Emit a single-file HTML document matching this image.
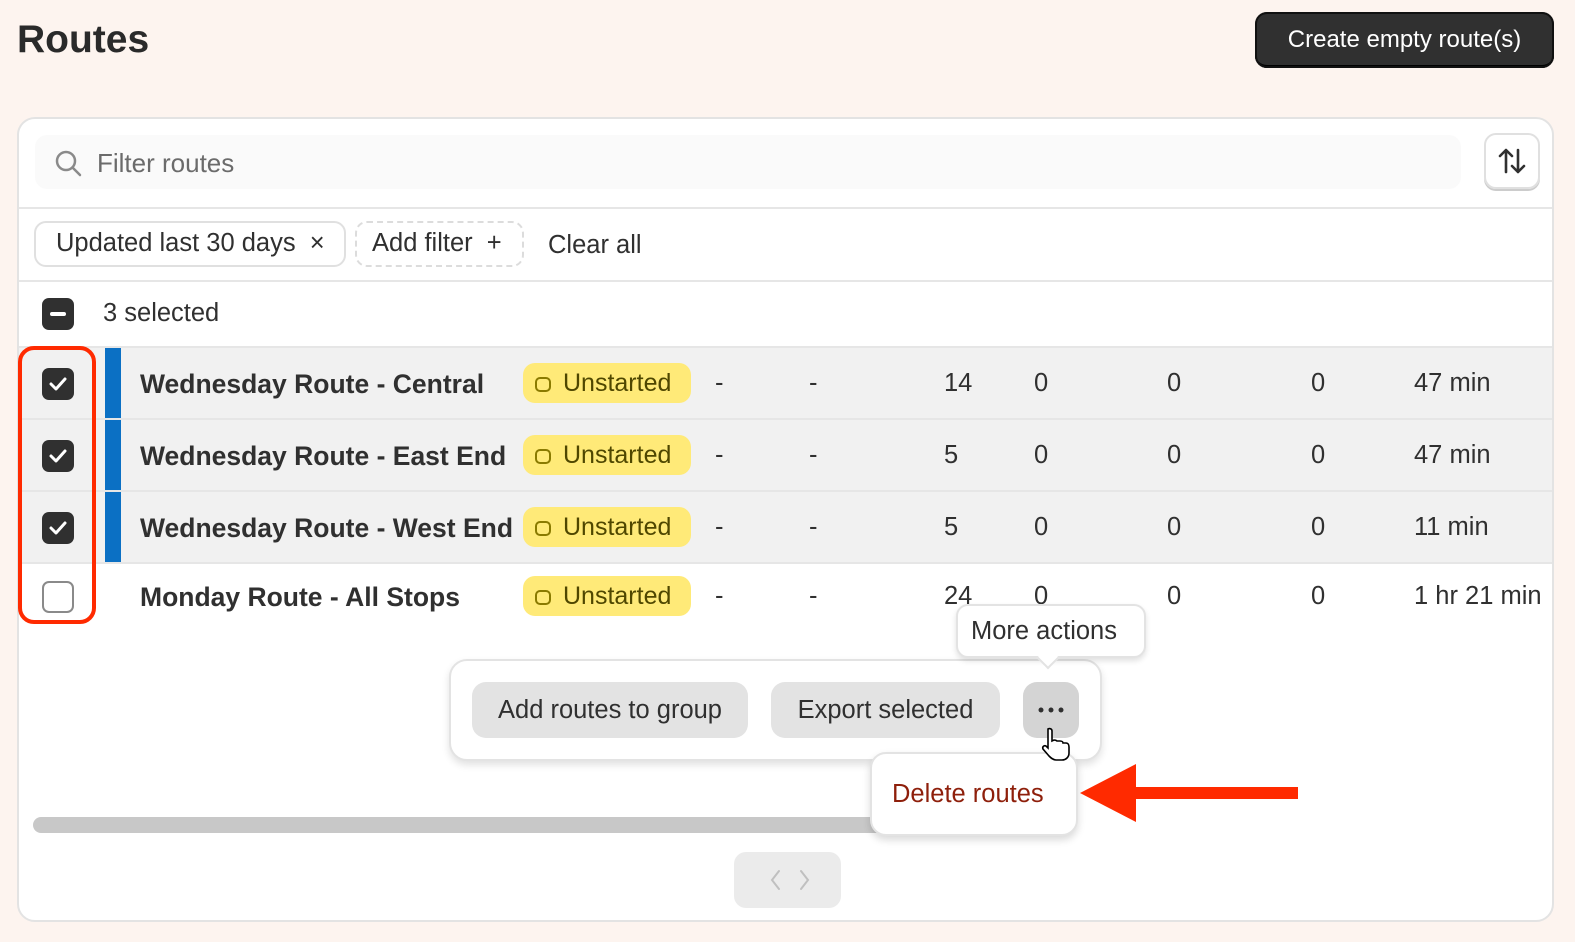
<!DOCTYPE html>
<html><head><style>
*{box-sizing:border-box;margin:0;padding:0}
body{width:1575px;height:942px;background:#fdf4ef;font-family:"Liberation Sans",sans-serif;color:#303030;position:relative;overflow:hidden}
.abs{position:absolute}
h1{position:absolute;left:17px;top:18px;font-size:39px;font-weight:bold;color:#2a2a2a}
.create{left:1255px;top:12px;width:299px;height:56px;background:#303030;border-radius:12px;color:#fff;font-size:24px;display:flex;align-items:center;justify-content:center;box-shadow:0 0 0 2px #111 inset,0 -3px 0 #000 inset}
.card{left:17px;top:117px;width:1537px;height:805px;background:#fff;border:2px solid #e3e3e3;border-radius:18px;overflow:hidden}
.search{left:16px;top:16px;width:1426px;height:54px;background:#fafafa;border-radius:12px}
.t{position:absolute;font-size:25.5px;white-space:nowrap}
.row{position:absolute;left:0;width:1537px;height:72px;border-top:2px solid #e6e6e6}
.sel{background:#f1f1f1}
.cb{position:absolute;left:23px;width:32px;height:32px;border-radius:7px;background:#303030}
.bar{position:absolute;left:86px;top:0;width:16px;height:100%;background:#0b70c4}
.badge{position:absolute;left:504px;width:168px;height:40px;border-radius:12px;background:#ffea78;color:#4f4700;font-size:25px;padding-left:40px;line-height:40px}
.badge:before{content:"";position:absolute;left:12px;top:14px;width:12px;height:11px;border:2.5px solid #8a7a00;border-radius:5px}
.name{font-weight:bold;left:121px;font-size:26.5px}
.btn{position:absolute;background:#e3e3e3;border-radius:14px;font-size:25.5px;display:flex;align-items:center;justify-content:center;color:#303030}
</style></head><body>
<h1>Routes</h1>
<div class="abs create">Create empty route(s)</div>
<div class="abs card">
  <div class="abs search"></div>
  <svg class="abs" style="left:35px;top:30px" width="30" height="30" viewBox="0 0 30 30"><circle cx="12" cy="12" r="9" fill="none" stroke="#8a8a8a" stroke-width="2.5"/><path d="M19 19l7 7" stroke="#8a8a8a" stroke-width="2.5" stroke-linecap="round"/></svg>
  <div class="t" style="left:78px;top:29px;color:#6b6b6b;font-size:26px">Filter routes</div>
  <div class="abs" style="left:1465px;top:14px;width:56px;height:56px;border:2px solid #e0e0e0;border-radius:12px;box-shadow:0 2px 0 #ccc"></div>
  <svg class="abs" style="left:1478px;top:28px" width="30" height="28" viewBox="0 0 30 28"><path d="M9 25V3M3 9l6-6 6 6M21 3v22M15 19l6 6 6-6" fill="none" stroke="#303030" stroke-width="2.6" stroke-linecap="round" stroke-linejoin="round"/></svg>
  <div class="abs" style="left:0;top:88px;width:1537px;border-top:2px solid #e6e6e6"></div>
  <div class="abs" style="left:15px;top:102px;width:312px;height:46px;border:2px solid #e0e0e0;border-radius:12px"></div>
  <div class="t" style="left:37px;top:110px">Updated last 30 days &nbsp;×</div>
  <div class="abs" style="left:336px;top:102px;width:169px;height:46px;border:2px dashed #dcdcdc;border-radius:12px"></div>
  <div class="t" style="left:353px;top:110px">Add filter &nbsp;+</div>
  <div class="t" style="left:529px;top:112px">Clear all</div>
  <div class="row" style="top:161px;height:69px"></div>
  <div class="cb" style="top:179px"><div class="abs" style="left:8px;top:14px;width:16px;height:4px;background:#fff;border-radius:2px"></div></div>
  <div class="t" style="left:84px;top:180px">3 selected</div>

  <div class="row sel" style="top:227px"><div class="bar"></div>
    <div class="cb" style="top:20px"><svg width="32" height="32"><path d="M9 16l5 5 9-10" fill="none" stroke="#fff" stroke-width="3" stroke-linecap="round" stroke-linejoin="round"/></svg></div>
    <div class="t name" style="top:21px">Wednesday Route - Central</div>
    <div class="badge" style="top:15px">Unstarted</div>
    <div class="t" style="left:696px;top:21px">-</div><div class="t" style="left:790px;top:21px">-</div>
    <div class="t" style="left:925px;top:21px">14</div><div class="t" style="left:1015px;top:21px">0</div><div class="t" style="left:1148px;top:21px">0</div><div class="t" style="left:1292px;top:21px">0</div><div class="t" style="left:1395px;top:21px">47 min</div>
  </div>
  <div class="row sel" style="top:299px"><div class="bar"></div>
    <div class="cb" style="top:20px"><svg width="32" height="32"><path d="M9 16l5 5 9-10" fill="none" stroke="#fff" stroke-width="3" stroke-linecap="round" stroke-linejoin="round"/></svg></div>
    <div class="t name" style="top:21px">Wednesday Route - East End</div>
    <div class="badge" style="top:15px">Unstarted</div>
    <div class="t" style="left:696px;top:21px">-</div><div class="t" style="left:790px;top:21px">-</div>
    <div class="t" style="left:925px;top:21px">5</div><div class="t" style="left:1015px;top:21px">0</div><div class="t" style="left:1148px;top:21px">0</div><div class="t" style="left:1292px;top:21px">0</div><div class="t" style="left:1395px;top:21px">47 min</div>
  </div>
  <div class="row sel" style="top:371px"><div class="bar"></div>
    <div class="cb" style="top:20px"><svg width="32" height="32"><path d="M9 16l5 5 9-10" fill="none" stroke="#fff" stroke-width="3" stroke-linecap="round" stroke-linejoin="round"/></svg></div>
    <div class="t name" style="top:21px">Wednesday Route - West End</div>
    <div class="badge" style="top:15px">Unstarted</div>
    <div class="t" style="left:696px;top:21px">-</div><div class="t" style="left:790px;top:21px">-</div>
    <div class="t" style="left:925px;top:21px">5</div><div class="t" style="left:1015px;top:21px">0</div><div class="t" style="left:1148px;top:21px">0</div><div class="t" style="left:1292px;top:21px">0</div><div class="t" style="left:1395px;top:21px">11 min</div>
  </div>
  <div class="row" style="top:443px;height:80px">
    <div class="cb" style="top:17px;background:#fff;border:2px solid #8a8a8a"></div>
    <div class="t name" style="top:18px">Monday Route - All Stops</div>
    <div class="badge" style="top:12px">Unstarted</div>
    <div class="t" style="left:696px;top:18px">-</div><div class="t" style="left:790px;top:18px">-</div>
    <div class="t" style="left:925px;top:18px">24</div><div class="t" style="left:1015px;top:18px">0</div><div class="t" style="left:1148px;top:18px">0</div><div class="t" style="left:1292px;top:18px">0</div><div class="t" style="left:1395px;top:18px">1 hr 21 min</div>
  </div>
  <div class="abs" style="left:14px;top:698px;width:900px;height:16px;background:#c8c8c8;border-radius:8px"></div>
  <div class="abs" style="left:715px;top:733px;width:107px;height:56px;background:#ebebeb;border-radius:12px"></div>
  <svg class="abs" style="left:730px;top:748px" width="80" height="26"><path d="M30 4l-7 9 7 9M52 4l7 9-7 9" fill="none" stroke="#c0c0c0" stroke-width="2" stroke-linecap="round"/></svg>
</div>
<div class="abs" style="left:18px;top:346px;width:78px;height:278px;border:4px solid #ff2a00;border-radius:16px"></div>
<div class="abs" style="left:449px;top:659px;width:653px;height:102px;background:#fff;border:2px solid #e3e3e3;border-radius:18px;box-shadow:0 4px 8px rgba(0,0,0,.12)"></div>
<div class="btn" style="left:472px;top:682px;width:276px;height:56px">Add routes to group</div>
<div class="btn" style="left:771px;top:682px;width:229px;height:56px">Export selected</div>
<div class="btn" style="left:1023px;top:682px;width:56px;height:56px;background:#d4d4d4"><svg width="32" height="8"><circle cx="6" cy="4" r="2.5" fill="#303030"/><circle cx="16" cy="4" r="2.5" fill="#303030"/><circle cx="26" cy="4" r="2.5" fill="#303030"/></svg></div>
<div class="abs" style="left:956px;top:604px;width:190px;height:54px;background:#fff;border:2px solid #e3e3e3;border-radius:12px;box-shadow:0 3px 6px rgba(0,0,0,.12)"></div>
<div class="abs" style="left:1040px;top:650px;width:16px;height:16px;background:#fff;transform:rotate(45deg);border-right:2px solid #e3e3e3;border-bottom:2px solid #e3e3e3"></div>
<div class="t" style="left:971px;top:617px">More actions</div>
<div class="abs" style="left:870px;top:752px;width:208px;height:84px;background:#fff;border:2px solid #e3e3e3;border-radius:16px;box-shadow:0 4px 8px rgba(0,0,0,.15)"></div>
<div class="t" style="left:892px;top:780px;color:#8e1f0b">Delete routes</div>
<svg class="abs" style="left:1078px;top:762px" width="222" height="62"><path d="M220 31H55" stroke="#ff2a00" stroke-width="12"/><path d="M2 31L58 2V60Z" fill="#ff2a00"/></svg>
<svg class="abs" style="left:1040px;top:726px" width="32" height="36" viewBox="0 0 32 36"><path d="M8 3c2-1 4 0 4 2v10l2-1c2 0 3 1 3 1l3 0c2 0 3 1 3 2l3 0c2 0 3 2 3 4v6c0 4-3 7-7 7h-6c-3 0-5-2-7-4l-6-7c-1-2 1-4 3-3l2 2V5c0-1 0-2 0-2z" fill="#fff" stroke="#000" stroke-width="1.6"/></svg>
</body></html>
